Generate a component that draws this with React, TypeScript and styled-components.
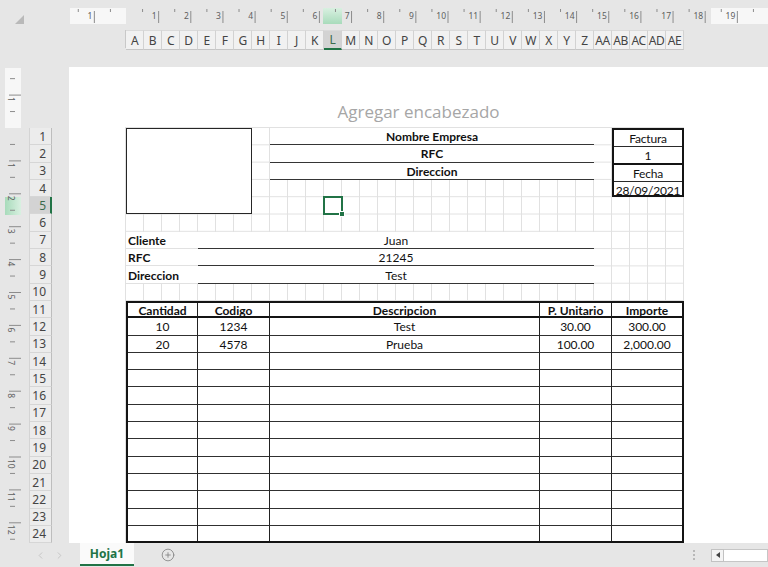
import React from "react";
import styled, { createGlobalStyle, css } from "styled-components";
import { ChevronLeft, ChevronRight, CirclePlus } from "lucide-react";

const GREEN = "#217346";
const ROW_H = 17.3;
const COLS = [..."ABCDEFGHIJKLMNOPQRSTUVWXYZ".split(""), "AA", "AB", "AC", "AD", "AE"];
const ROWS = Array.from({ length: 24 }, (_, i) => i + 1);

const GlobalStyle = createGlobalStyle`
  html, body { margin: 0; padding: 0; background: #e6e6e6; }
  * { box-sizing: border-box; }
`;

const Frame = styled.div`
  width: 768px;
  height: 567px;
  overflow: hidden;
  display: grid;
  grid-template-columns: 69px 699px;
  grid-template-rows: 67px 476px 24px;
  background: #e6e6e6;
  font-family: "Noto Sans", "Open Sans", sans-serif;
`;

const Corner = styled.div`
  padding: 15px 0 0 15px;
`;

const SelectAll = styled.div`
  width: 0;
  height: 0;
  border-style: solid;
  border-width: 0 0 9px 9px;
  border-color: transparent transparent #b9b9b9 transparent;
`;

const TopArea = styled.div`
  display: flex;
  flex-direction: column;
`;

const RulerH = styled.svg`
  display: block;
  margin-top: 8px;
`;

const ColHeaderRow = styled.div`
  margin: 6px 0 0 56px;
  display: grid;
  grid-template-columns: repeat(31, 18px);
  height: 18px;
  border-left: 1px solid #c8c8c8;
  width: 559px;
`;

const ColHeader = styled.div<{ $selected?: boolean }>`
  display: flex;
  align-items: center;
  justify-content: center;
  font-size: 12px;
  letter-spacing: -0.5px;
  color: #444;
  background: #f1f1f1;
  border-right: 1px solid #d2d2d2;
  border-top: 1px solid #dadada;
  border-bottom: 1px solid #c6c6c6;
  ${(p) =>
    p.$selected &&
    css`
      background: #d3d3d3;
      color: #3c6b4e;
      border-bottom: 2px solid ${GREEN};
    `}
`;

const SideArea = styled.div`
  display: flex;
  align-items: flex-start;
`;

const RulerV = styled.svg`
  display: block;
  flex: none;
  margin-left: 5px;
`;

const RowHeaderCol = styled.div`
  margin: 61px 0 0 8px;
  width: 23px;
  display: flex;
  flex-direction: column;
  border-left: 1px solid #d4d4d4;
`;

const RowHeader = styled.div<{ $selected?: boolean }>`
  height: ${ROW_H}px;
  display: flex;
  align-items: center;
  justify-content: flex-end;
  padding-right: 5px;
  font-size: 12px;
  color: #444;
  background: #ececec;
  border-right: 1px solid #bdbdbd;
  border-bottom: 1px solid #d6d6d6;
  ${(p) =>
    p.$selected &&
    css`
      background: #d3d3d3;
      color: #3c6b4e;
      border-right: 2px solid ${GREEN};
      padding-right: 4px;
    `}
`;

const Page = styled.div`
  background: #fff;
  overflow: hidden;
  display: flex;
  flex-direction: column;
`;

const PageHeader = styled.div`
  flex: none;
  height: 60px;
  display: flex;
  align-items: flex-end;
  justify-content: center;
  padding-bottom: 4px;
  font-family: "Open Sans", "Noto Sans", sans-serif;
  font-size: 17px;
  color: #a6a6a6;
`;

const Sheet = styled.div`
  flex: none;
  margin-left: 56px;
  width: 559px;
  border-left: 1px solid #e1e1e1;
  border-top: 1px solid #e1e1e1;
  display: grid;
  grid-template-columns: repeat(31, 18px);
  grid-template-rows: repeat(24, ${ROW_H}px);
  background-image: linear-gradient(to right, transparent 17px, #e1e1e1 17px),
    linear-gradient(to bottom, transparent ${ROW_H - 1}px, #e1e1e1 ${ROW_H - 1}px);
  background-size: 18px 100%, 100% ${ROW_H}px;
  font-family: Lato, "Liberation Sans", sans-serif;
  font-size: 12px;
  color: #111;
`;

const LogoBox = styled.div`
  grid-column: 1 / 8;
  grid-row: 1 / 6;
  background: #fff;
  border: 1px solid #262626;
`;

const CompanyLine = styled.div<{ $row: number }>`
  grid-column: 9 / 27;
  grid-row: ${(p) => p.$row};
  background: #fff;
  border-bottom: 1px solid #353535;
  font-weight: 700;
  display: flex;
  align-items: center;
  justify-content: center;
  padding-top: 1px;
`;

const InvoiceBox = styled.div`
  grid-column: 28 / 32;
  grid-row: 1 / 5;
  display: grid;
  grid-template-rows: repeat(4, 1fr);
  background: #fff;
  border: 2px solid #141414;
`;

const InvoiceCell = styled.div<{ $divider?: "thin" | "thick" }>`
  display: flex;
  align-items: center;
  justify-content: center;
  padding-top: 1px;
  letter-spacing: -0.2px;
  ${(p) => p.$divider === "thin" && css`border-bottom: 1px solid #2a2a2a;`}
  ${(p) => p.$divider === "thick" && css`border-bottom: 2px solid #141414;`}
`;

const SelectedCell = styled.div`
  grid-column: 12 / 13;
  grid-row: 5 / 6;
  margin: -1px -1px -1px -1px;
  border: 2px solid ${GREEN};
  position: relative;
`;

const FillHandle = styled.div`
  position: absolute;
  right: -4px;
  bottom: -4px;
  width: 6px;
  height: 6px;
  background: ${GREEN};
  border: 1px solid #fff;
`;

const ClientLabel = styled.div<{ $row: number }>`
  grid-column: 1 / 5;
  grid-row: ${(p) => p.$row};
  background: #fff;
  border-bottom: 1px solid #e1e1e1;
  font-weight: 700;
  padding: 1px 0 0 2px;
  display: flex;
  align-items: center;
`;

const ClientValue = styled.div<{ $row: number }>`
  grid-column: 5 / 27;
  grid-row: ${(p) => p.$row};
  background: #fff;
  border-bottom: 1px solid #353535;
  display: flex;
  align-items: center;
  justify-content: center;
  padding-top: 1px;
`;

const ItemsTable = styled.div`
  grid-column: 1 / 32;
  grid-row: 11 / 25;
  background: #fff;
  border: 2px solid #141414;
  display: grid;
  grid-template-columns: 70px 72px 270px 72px 1fr;
  grid-template-rows: ${ROW_H - 2}px repeat(12, ${ROW_H}px) 1fr;
`;

const TCell = styled.div<{ $head?: boolean; $lastCol?: boolean; $lastRow?: boolean }>`
  display: flex;
  align-items: center;
  justify-content: center;
  padding-top: 1px;
  border-right: ${(p) => (p.$lastCol ? "none" : "1px solid #222")};
  border-bottom: ${(p) => (p.$lastRow ? "none" : p.$head ? "2px solid #141414" : "1px solid #303030")};
  font-weight: ${(p) => (p.$head ? 700 : 400)};
`;

const TabBar = styled.div`
  grid-column: 1 / 3;
  display: flex;
  align-items: stretch;
  background: #e6e6e6;
`;

const NavArrows = styled.div`
  width: 80px;
  display: flex;
  align-items: center;
  gap: 8px;
  padding-left: 35px;
  color: #b8b8b8;
`;

const SheetTab = styled.div`
  width: 54px;
  height: 23px;
  display: flex;
  align-items: center;
  justify-content: center;
  background: #fafafa;
  color: ${GREEN};
  font-weight: 700;
  font-size: 12px;
  border-bottom: 2px solid ${GREEN};
`;

const AddSheet = styled.div`
  margin-left: 27px;
  display: flex;
  align-items: center;
  color: #7a7a7a;
`;

const Spacer = styled.div`
  flex: 1;
`;

const MoreDots = styled.div`
  width: 14px;
  display: flex;
  flex-direction: column;
  align-items: center;
  justify-content: center;
  gap: 2px;
`;

const Dot = styled.span`
  width: 2px;
  height: 2px;
  background: #a8a8a8;
  border-radius: 1px;
`;

const HScroll = styled.div`
  margin-left: 10px;
  width: 57px;
  display: flex;
  align-items: center;
`;

const ScrollArrow = styled.div`
  width: 13px;
  height: 13px;
  border: 1px solid #c2c2c2;
  background: #f4f4f4;
  display: flex;
  align-items: center;
  justify-content: center;
`;

const ArrowTri = styled.span`
  width: 0;
  height: 0;
  border-style: solid;
  border-width: 3px 4px 3px 0;
  border-color: transparent #444 transparent transparent;
`;

const ScrollTrack = styled.div`
  flex: 1;
  height: 13px;
  background: #fff;
  border: 1px solid #c6c6c6;
  border-left: none;
`;

const CM_H = 32.15;
const CM_V = 32.9;
const TICK = "#8c8c8c";

function HorizontalRuler() {
  const items: React.ReactNode[] = [];
  for (let n = -1; n <= 20; n++) {
    const p = 57.5 + CM_H * n;
    if (n === 0 || p > 699) continue;
    items.push(<line key={`b${n}`} x1={p} x2={p} y1={3} y2={15} stroke={TICK} strokeWidth={1} />);
    items.push(
      <text key={`t${n}`} x={p - 2} y={11} textAnchor="end" fontSize={8.5} fill="#5e5e5e" fontFamily='"Noto Sans", sans-serif'>
        {Math.abs(n)}
      </text>
    );
  }
  for (let n = -2; n <= 20; n++) {
    const p = 57.5 + CM_H * n + CM_H / 2;
    if (p < 1 || p > 699) continue;
    items.push(<line key={`h${n}`} x1={p} x2={p} y1={1} y2={4} stroke={TICK} strokeWidth={1} />);
  }
  return (
    <RulerH width={699} height={16} viewBox="0 0 699 16">
      <defs>
        <linearGradient id="hg" x1="0" y1="0" x2="0" y2="1">
          <stop offset="0" stopColor="#d9f0e1" />
          <stop offset="1" stopColor="#a8dbbb" />
        </linearGradient>
      </defs>
      <rect x={1} y={0} width={56} height={16} fill="#f7f7f7" />
      <rect x={642} y={0} width={57} height={16} fill="#f7f7f7" />
      <rect x={254} y={0} width={19} height={16} fill="url(#hg)" />
      {items}
    </RulerH>
  );
}

function VerticalRuler() {
  const items: React.ReactNode[] = [];
  for (let n = -1; n <= 14; n++) {
    const q = 61 + CM_V * n;
    if (n === 0 || q > 476) continue;
    items.push(<line key={`b${n}`} x1={4} x2={16} y1={q} y2={q} stroke={TICK} strokeWidth={1} />);
    items.push(
      <text
        key={`t${n}`}
        transform={`translate(3, ${q + 2}) rotate(90)`}
        fontSize={8.5}
        fill="#5e5e5e"
        fontFamily='"Noto Sans", sans-serif'
      >
        {Math.abs(n)}
      </text>
    );
  }
  for (let n = -2; n <= 14; n++) {
    const q = 61 + CM_V * n + CM_V / 2;
    if (q < 1 || q > 476) continue;
    items.push(<line key={`h${n}`} x1={5} x2={10} y1={q} y2={q} stroke={TICK} strokeWidth={1} />);
  }
  return (
    <RulerV width={16} height={476} viewBox="0 0 16 476">
      <defs>
        <linearGradient id="vg" x1="0" y1="0" x2="1" y2="0">
          <stop offset="0" stopColor="#a8dbbb" />
          <stop offset="1" stopColor="#d9f0e1" />
        </linearGradient>
      </defs>
      <rect x={0} y={1} width={16} height={60} fill="#f7f7f7" />
      <rect x={0} y={130} width={16} height={18} fill="url(#vg)" />
      {items}
    </RulerV>
  );
}

const items = [
  ["10", "1234", "Test", "30.00", "300.00"],
  ["20", "4578", "Prueba", "100.00", "2,000.00"],
];
const headers = ["Cantidad", "Codigo", "Descripcion", "P. Unitario", "Importe"];

export default function App() {
  const bodyRows: string[][] = [...items, ...Array.from({ length: 11 }, () => ["", "", "", "", ""])];
  return (
    <>
      <GlobalStyle />
      <Frame>
        <Corner>
          <SelectAll />
        </Corner>
        <TopArea>
          <HorizontalRuler />
          <ColHeaderRow>
            {COLS.map((c) => (
              <ColHeader key={c} $selected={c === "L"}>
                {c}
              </ColHeader>
            ))}
          </ColHeaderRow>
        </TopArea>
        <SideArea>
          <VerticalRuler />
          <RowHeaderCol>
            {ROWS.map((r) => (
              <RowHeader key={r} $selected={r === 5}>
                {r}
              </RowHeader>
            ))}
          </RowHeaderCol>
        </SideArea>
        <Page>
          <PageHeader>Agregar encabezado</PageHeader>
          <Sheet>
            <LogoBox />
            <CompanyLine $row={1}>Nombre Empresa</CompanyLine>
            <CompanyLine $row={2}>RFC</CompanyLine>
            <CompanyLine $row={3}>Direccion</CompanyLine>
            <InvoiceBox>
              <InvoiceCell $divider="thin">Factura</InvoiceCell>
              <InvoiceCell $divider="thick">1</InvoiceCell>
              <InvoiceCell $divider="thin">Fecha</InvoiceCell>
              <InvoiceCell>28/09/2021</InvoiceCell>
            </InvoiceBox>
            <SelectedCell>
              <FillHandle />
            </SelectedCell>
            <ClientLabel $row={7}>Cliente</ClientLabel>
            <ClientValue $row={7}>Juan</ClientValue>
            <ClientLabel $row={8}>RFC</ClientLabel>
            <ClientValue $row={8}>21245</ClientValue>
            <ClientLabel $row={9}>Direccion</ClientLabel>
            <ClientValue $row={9}>Test</ClientValue>
            <ItemsTable>
              {headers.map((h, i) => (
                <TCell key={h} $head $lastCol={i === 4}>
                  {h}
                </TCell>
              ))}
              {bodyRows.map((row, ri) =>
                row.map((v, ci) => (
                  <TCell key={`${ri}-${ci}`} $lastCol={ci === 4} $lastRow={ri === bodyRows.length - 1}>
                    {v}
                  </TCell>
                ))
              )}
            </ItemsTable>
          </Sheet>
        </Page>
        <TabBar>
          <NavArrows>
            <ChevronLeft size={11} strokeWidth={1.5} />
            <ChevronRight size={11} strokeWidth={1.5} />
          </NavArrows>
          <SheetTab>Hoja1</SheetTab>
          <AddSheet>
            <CirclePlus size={14} strokeWidth={1.3} />
          </AddSheet>
          <Spacer />
          <MoreDots>
            <Dot />
            <Dot />
            <Dot />
          </MoreDots>
          <HScroll>
            <ScrollArrow>
              <ArrowTri />
            </ScrollArrow>
            <ScrollTrack />
          </HScroll>
        </TabBar>
      </Frame>
    </>
  );
}
